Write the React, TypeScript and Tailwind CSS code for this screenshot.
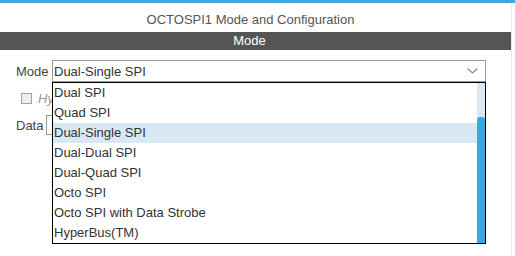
const options = [
  "Dual SPI",
  "Quad SPI",
  "Dual-Single SPI",
  "Dual-Dual SPI",
  "Dual-Quad SPI",
  "Octo SPI",
  "Octo SPI with Data Strobe",
  "HyperBus(TM)",
];

export default function App() {
  const selected = "Dual-Single SPI";

  return (
    <div
      className="w-[515px] h-[256px] bg-white overflow-hidden flex flex-col"
      style={{ fontFamily: '"Liberation Sans", Arial, sans-serif' }}
    >
      {/* top accent */}
      <div className="h-[3px] bg-[#3aa8dc] shrink-0" />

      <div className="flex flex-1">
        {/* PANEL */}
        <div className="w-[511px] shrink-0 relative">
          <div className="h-[29px] pt-[9px] pr-[10px] text-center text-[13px] leading-[15px] text-[#555]">
            OCTOSPI1 Mode and Configuration
          </div>
          <div className="h-[18px] bg-[#555555] pr-[12px] text-center text-[13px] leading-[18px] text-white">
            Mode
          </div>

          {/* MODE ROW */}
          <div className="flex items-center mt-[10px] h-[22px]">
            <span className="w-[52px] shrink-0 pl-[16px] text-[13px] text-[#444] leading-[15px]">
              Mode
            </span>
            <div className="w-[434px] shrink-0 h-[22px] border border-[#9a9a9a] flex items-center justify-between pl-[1px] pr-[7px]">
              <span className="text-[13px] leading-[15px] text-[#333]">{selected}</span>
              <svg width="11" height="6" viewBox="0 0 11 6" fill="none">
                <path d="M0.5 0.5 L5.5 5 L10.5 0.5" stroke="#8a8a8a" strokeWidth="1.1" />
              </svg>
            </div>
          </div>

          {/* HIDDEN ROWS BEHIND THE LIST (clipped at the list edge) */}
          <div className="w-[52px] overflow-hidden">
            <div className="flex items-center gap-[6px] pl-[21px] mt-[10px] h-[12px] whitespace-nowrap">
              <span className="w-[11px] h-[11px] shrink-0 border border-[#a0a0a0] bg-[#eeeeee]" />
              <span className="text-[13px] leading-[15px] italic text-[#9a9a9a]">Hy</span>
            </div>
            <div className="flex items-center gap-[3px] pl-[16px] mt-[11px] h-[20px] whitespace-nowrap">
              <span className="text-[13px] leading-[15px] text-[#444]">Data</span>
              <span className="w-[100px] h-[20px] shrink-0 border border-[#9a9a9a]" />
            </div>
          </div>

          {/* DROPDOWN LIST */}
          <div className="absolute left-[52px] top-[79px] w-[434px] h-[162px] bg-white border border-black flex">
            <div className="flex-1 flex flex-col">
              {options.map((o) => (
                <div
                  key={o}
                  className={
                    "h-[20px] pl-[1px] text-[13px] leading-[20px] text-[#333] " +
                    (o === selected ? "bg-[#d9e8f5]" : "")
                  }
                >
                  {o}
                </div>
              ))}
            </div>
            <div className="w-[8px] bg-[#d9e8f5] flex flex-col justify-end">
              <div className="h-[126px] bg-[#3aa8dc] rounded-t-[3px]" />
            </div>
          </div>
        </div>

        {/* RIGHT EDGE */}
        <div className="w-px bg-[#e8e8e8]" />
        <div className="flex-1 bg-white" />
      </div>
    </div>
  );
}
